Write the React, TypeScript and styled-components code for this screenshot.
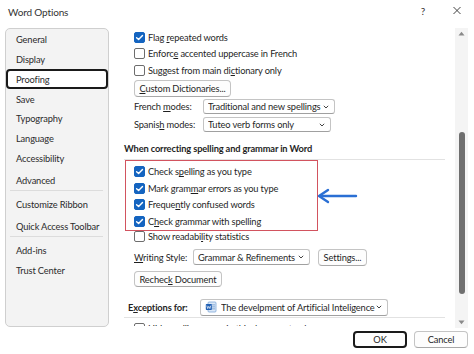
import React from "react";
import styled, { createGlobalStyle } from "styled-components";

const Global = createGlobalStyle`
  html, body { margin: 0; padding: 0; background: #ffffff; }
  body { font-family: Lato, "Noto Sans", sans-serif; font-size: 9.3px; letter-spacing: -0.15px; color: #1f1f1f; }
  * { box-sizing: border-box; }
`;

const Window = styled.div`
  position: relative;
  width: 474px;
  height: 354px;
  overflow: hidden;
  background: #ffffff;
  display: flex;
  flex-direction: column;
`;

const TitleBar = styled.div`
  height: 28px;
  display: flex;
  align-items: flex-start;
  padding: 4px 0 0 8px;
`;

const Title = styled.div`
  flex: 1;
  font-size: 10px;
  color: #333;
  line-height: 16px;
`;

const TitleButton = styled.div<{ $w: number }>`
  width: ${(p) => p.$w}px;
  color: #333;
  font-size: 10px;
  line-height: 14px;
  display: flex;
  justify-content: center;
`;

const Body = styled.div`
  height: 300px;
  display: flex;
  padding-left: 5px;
`;

const Nav = styled.div`
  width: 104px;
  height: 299px;
  border: 1px solid #cfcfcf;
  border-radius: 5px;
  background: #f3f3f3;
  display: flex;
  flex-direction: column;
  flex-shrink: 0;
`;

const NavItem = styled.div<{ $selected?: boolean; $mt?: number }>`
  height: 20px;
  margin-top: ${(p) => p.$mt ?? 0}px;
  display: flex;
  align-items: center;
  padding-left: ${(p) => (p.$selected ? 8 : 10)}px;
  color: #2b2b2b;
  white-space: nowrap;
  border: ${(p) => (p.$selected ? "2px solid #1a1a1a" : "none")};
  border-radius: 4px;
  background: ${(p) => (p.$selected ? "#ffffff" : "transparent")};
`;

const NavSep = styled.div<{ $mb: number }>`
  height: 1px;
  background: #dcdcdc;
  margin: 0 5px ${(p) => p.$mb}px 4px;
`;

const Main = styled.div`
  flex: 1;
  min-width: 0;
  height: 298px;
  overflow: hidden;
  display: flex;
  flex-direction: column;
  padding: 1px 0 0 15px;
`;

const Row = styled.div<{ $mt?: number; $h?: number }>`
  height: ${(p) => p.$h ?? 16.5}px;
  margin-top: ${(p) => p.$mt ?? 0}px;
  display: flex;
  align-items: center;
  padding-left: 10px;
  flex-shrink: 0;
`;

const Box = styled.span<{ $on?: boolean }>`
  width: 11px;
  height: 11px;
  border-radius: 2px;
  margin-right: 3px;
  flex-shrink: 0;
  display: inline-flex;
  align-items: center;
  justify-content: center;
  background: ${(p) => (p.$on ? "#1464c0" : "#ffffff")};
  border: 1px solid ${(p) => (p.$on ? "#1464c0" : "#6d6d6d")};
`;

const Label = styled.span<{ $w?: number }>`
  display: inline-block;
  flex-shrink: 0;
  width: ${(p) => (p.$w ? `${p.$w}px` : "auto")};
  white-space: nowrap;
  color: #1f1f1f;
`;

const Key = styled.span`
  text-decoration: underline;
  text-underline-offset: 1px;
`;

const Button = styled.div<{ $w: number; $h?: number; $primary?: boolean }>`
  width: ${(p) => p.$w}px;
  height: ${(p) => p.$h ?? 17}px;
  border: ${(p) => (p.$primary ? "2px solid #1a1a1a" : "1px solid #c4c4c4")};
  border-bottom-color: ${(p) => (p.$primary ? "#1a1a1a" : "#a8a8a8")};
  border-radius: 4px;
  background: #fdfdfd;
  display: flex;
  align-items: center;
  justify-content: center;
  white-space: nowrap;
  color: #1f1f1f;
  flex-shrink: 0;
`;

const Select = styled.div<{ $w: number; $h?: number }>`
  width: ${(p) => p.$w}px;
  height: ${(p) => p.$h ?? 16}px;
  border: 1px solid #c4c4c4;
  border-bottom-color: #a0a0a0;
  border-radius: 3px;
  background: #ffffff;
  display: flex;
  align-items: center;
  padding: 0 5px 0 4px;
  white-space: nowrap;
  flex-shrink: 0;
`;

const SelectText = styled.span`
  flex: 1;
  min-width: 0;
  overflow: hidden;
`;

const Heading = styled.div`
  margin-top: 8px;
  height: 19px;
  padding-bottom: 2px;
  display: flex;
  align-items: center;
  font-weight: 700;
  border-bottom: 1px solid #e2e2e2;
  white-space: nowrap;
  flex-shrink: 0;
`;

const Highlight = styled.div`
  margin-left: 1px;
  width: 193px;
  border: 1.5px solid #d2535f;
  padding: 3px 0 0 8px;
  display: flex;
  flex-direction: column;
  flex-shrink: 0;
`;

const HLRow = styled.div`
  height: 16.5px;
  display: flex;
  align-items: center;
`;

const ExceptRow = styled.div`
  margin-top: 12px;
  height: 18.5px;
  display: flex;
  align-items: center;
  padding-left: 4px;
  border-bottom: 1px solid #e2e2e2;
  flex-shrink: 0;
  padding-bottom: 1px;
`;

const BoldLabel = styled.span`
  font-weight: 700;
  width: 72px;
  flex-shrink: 0;
  white-space: nowrap;
`;

const Scrollbar = styled.div`
  width: 13px;
  height: 300px;
  margin-left: 10px;
  margin-right: 6px;
  flex-shrink: 0;
  background: #f4f4f4;
  display: flex;
  flex-direction: column;
  align-items: center;
  padding-top: 3px;
`;

const Thumb = styled.div`
  width: 6px;
  height: 162px;
  border-radius: 3px;
  background: #6f6f6f;
  margin-top: 96px;
`;

const ArrowDown = styled.div`
  margin-top: 22px;
`;

const Footer = styled.div`
  flex: 1;
  display: flex;
  justify-content: flex-end;
  gap: 7px;
  padding: 3px 6px 0 0;
`;

const Annotation = styled.svg`
  position: absolute;
  left: 315px;
  top: 188px;
`;

const Check = () => (
  <svg width="9" height="9" viewBox="0 0 9 9">
    <path d="M1.6 4.7 L3.6 6.6 L7.5 2.4" fill="none" stroke="#fff" strokeWidth="1.4" strokeLinecap="round" strokeLinejoin="round" />
  </svg>
);

const Chevron = () => (
  <svg width="6" height="4" viewBox="0 0 6 4" style={{ flexShrink: 0 }}>
    <path d="M0.8 0.8 L3 3 L5.2 0.8" fill="none" stroke="#444" strokeWidth="1" />
  </svg>
);

const DocIcon = () => (
  <svg width="12" height="12" viewBox="0 0 12 12" style={{ marginRight: 4, flexShrink: 0 }}>
    <rect x="3" y="1" width="8" height="10" rx="1" fill="#dbe8f7" stroke="#7ea7d8" strokeWidth="0.8" />
    <rect x="6" y="3.5" width="4" height="0.8" fill="#6f98cc" />
    <rect x="6" y="5.5" width="4" height="0.8" fill="#6f98cc" />
    <rect x="6" y="7.5" width="4" height="0.8" fill="#6f98cc" />
    <rect x="0.8" y="3" width="6" height="6" rx="0.8" fill="#1f5fb4" />
    <path d="M1.8 4.6 L2.7 7.6 L3.8 5.3 L4.9 7.6 L5.8 4.6" fill="none" stroke="#fff" strokeWidth="0.7" />
  </svg>
);

const CB = ({ on, children }: { on?: boolean; children: React.ReactNode }) => (
  <>
    <Box $on={on}>{on && <Check />}</Box>
    <Label>{children}</Label>
  </>
);

export default function App() {
  return (
    <>
      <Global />
      <Window>
        <TitleBar>
          <Title>Word Options</Title>
          <TitleButton $w={12}>?</TitleButton>
          <TitleButton $w={22} style={{ marginLeft: 17, marginRight: 6 }}>
            <svg width="10" height="14" viewBox="0 0 10 14">
              <path d="M1.5 3 L8.5 10 M8.5 3 L1.5 10" stroke="#444" strokeWidth="1" />
            </svg>
          </TitleButton>
        </TitleBar>
        <Body>
          <Nav>
            <NavItem>General</NavItem>
            <NavItem>Display</NavItem>
            <NavItem $selected>Proofing</NavItem>
            <NavItem>Save</NavItem>
            <NavItem $mt={-1}>Typography</NavItem>
            <NavItem>Language</NavItem>
            <NavItem>Accessibility</NavItem>
            <NavItem $mt={2}>Advanced</NavItem>
            <NavSep $mb={3} />
            <NavItem>Customize Ribbon</NavItem>
            <NavItem $mt={2}>Quick Access Toolbar</NavItem>
            <NavSep $mb={3} />
            <NavItem>Add-ins</NavItem>
            <NavItem>Trust Center</NavItem>
          </Nav>
          <Main>
            <Row><CB on>Flag <Key>r</Key>epeated words</CB></Row>
            <Row><CB>Enforc<Key>e</Key> accented uppercase in French</CB></Row>
            <Row><CB>Suggest from main di<Key>c</Key>tionary only</CB></Row>
            <Row $mt={1.5} $h={17}>
              <Button $w={97}><span><Key>C</Key>ustom Dictionaries...</span></Button>
            </Row>
            <Row $mt={1.5} $h={16}>
              <Label $w={69}>French <Key>m</Key>odes:</Label>
              <Select $w={132} $h={15}>
                <SelectText>Traditional and new spellings</SelectText>
                <Chevron />
              </Select>
            </Row>
            <Row $mt={2} $h={16}>
              <Label $w={69}>Spanis<Key>h</Key> modes:</Label>
              <Select $w={128} $h={15}>
                <SelectText>Tuteo verb forms only</SelectText>
                <Chevron />
              </Select>
            </Row>
            <Heading>When correcting spelling and grammar in Word</Heading>
            <Highlight>
              <HLRow><CB on>Check s<Key>p</Key>elling as you type</CB></HLRow>
              <HLRow><CB on>Mark gram<Key>m</Key>ar errors as you type</CB></HLRow>
              <HLRow><CB on>Freque<Key>n</Key>tly confused words</CB></HLRow>
              <HLRow><CB on>C<Key>h</Key>eck grammar with spelling</CB></HLRow>
            </Highlight>
            <Row $mt={-2.5}><CB>Show readabi<Key>l</Key>ity statistics</CB></Row>
            <Row $mt={4.5} $h={16}>
              <Label $w={59}><Key>W</Key>riting Style:</Label>
              <Select $w={117} $h={16}>
                <SelectText>Grammar &amp; Refinements</SelectText>
                <Chevron />
              </Select>
              <Button $w={49} $h={17} style={{ marginLeft: 8 }}><span>Settings...</span></Button>
            </Row>
            <Row $mt={6} $h={16}>
              <Button $w={88} $h={16}><span>Rechec<Key>k</Key> Document</span></Button>
            </Row>
            <ExceptRow>
              <BoldLabel>E<Key>x</Key>ceptions for:</BoldLabel>
              <Select $w={188} $h={17}>
                <DocIcon />
                <SelectText>The develpment of Artificial Inteligence</SelectText>
                <Chevron />
              </Select>
            </ExceptRow>
            <Row $mt={3}><CB>Hide spelling errors in this document only</CB></Row>
          </Main>
          <Scrollbar>
            <svg width="7" height="5" viewBox="0 0 7 5"><path d="M0.5 4.5 L3.5 0.8 L6.5 4.5 Z" fill="#8a8a8a" /></svg>
            <Thumb />
            <ArrowDown>
              <svg width="7" height="5" viewBox="0 0 7 5"><path d="M0.5 0.5 L3.5 4.2 L6.5 0.5 Z" fill="#8a8a8a" /></svg>
            </ArrowDown>
          </Scrollbar>
        </Body>
        <Footer>
          <Button $w={54} $h={17} $primary>OK</Button>
          <Button $w={54} $h={17}>Cancel</Button>
        </Footer>
        <Annotation width="44" height="16" viewBox="0 0 44 16">
          <path d="M6 8 L41 8" stroke="#2a6fd4" strokeWidth="2.4" strokeLinecap="round" />
          <path d="M13 2 L4 8 L13 14" fill="none" stroke="#2a6fd4" strokeWidth="2.4" strokeLinecap="round" strokeLinejoin="round" />
        </Annotation>
      </Window>
    </>
  );
}
